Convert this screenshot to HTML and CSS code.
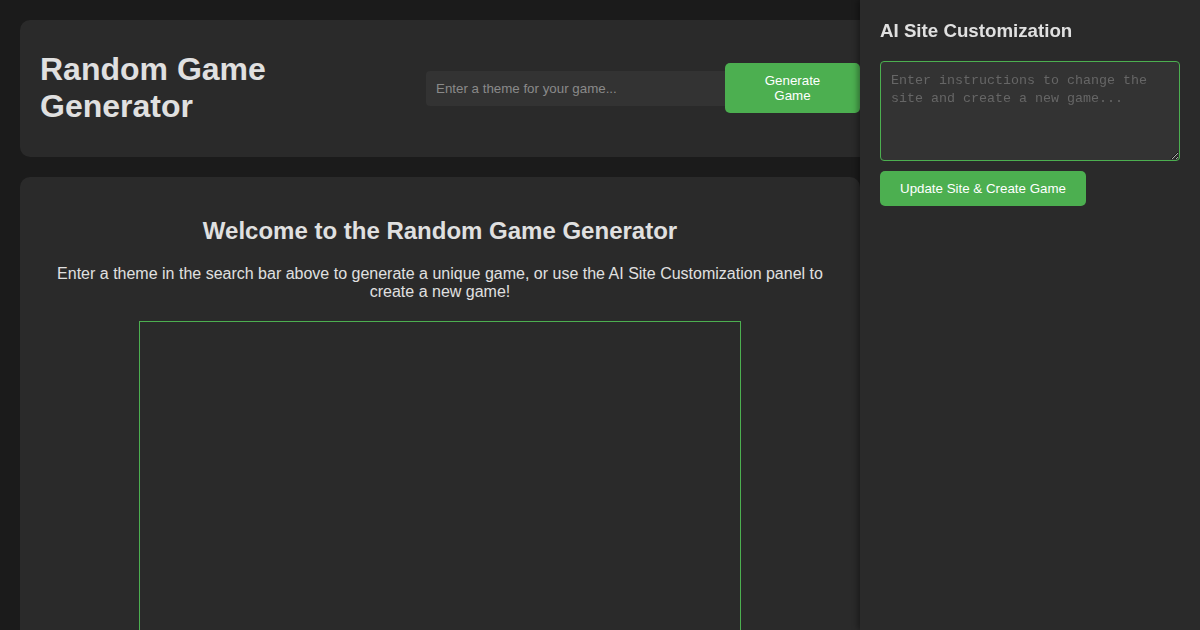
FILE: index.html
```html
<!DOCTYPE html>
<html>
<head lang="en">
    <meta charset="UTF-8">
    <title>Random Game Generator</title>

    <link rel="stylesheet" href="styles.css">

</head>
<body>

    <div id="main">
        <!-- 顶部: 标题 + 搜索 -->
        <div id="header">
            <h1>Random Game Generator</h1>
            <div class="search">
                <input type="text" placeholder="Enter a theme for your game..." />
                <button class="btn gen">Generate Game</button>
            </div>
        </div>

        <!-- 游戏区域 -->
        <div id="game">
            <h2>Welcome to the Random Game Generator</h2>
            <p>Enter a theme in the search bar above to generate a unique game, or use the AI Site Customization panel to create a new game!</p>
            <canvas id="canvas" width="600" height="400"></canvas>
        </div>
    </div>

    <!-- 右侧面板 -->
    <div id="sidebar">
        <h3>AI Site Customization</h3>
        <textarea placeholder="Enter instructions to change the site and create a new game..."></textarea>
        <button class="btn">Update Site &amp; Create Game</button>
    </div>

</body>
</html>
```

FILE: styles.css
```css
*{
    box-sizing: border-box;
}

body{
    margin: 0;
    background-color: #1b1b1b;
    color: #e0e0e0;
    font-family: "Liberation Sans", Arial, sans-serif;
    overflow: hidden;
}

#main{
    margin-right: 340px;
    padding: 20px 0 20px 20px;
}

#header{
    display: flex;
    align-items: center;
    justify-content: space-between;
    margin-right: -40px;
    padding: 10px 40px 10px 20px;
    background-color: #2a2a2a;
    border-radius: 10px;
}

#header h1{
    width: 340px;
    font-size: 32px;
    margin: 20.5px 0 22.5px;
}

.search{
    display: flex;
    align-items: center;
    margin-top: -1px;
}

.search input{
    width: 299px;
    padding: 10px;
    border: none;
    border-radius: 4px 0 0 4px;
    background-color: #333;
    color: #e0e0e0;
    font-family: "Liberation Sans", Arial, sans-serif;
    font-size: 13.33px;
    outline: none;
}

.search input::placeholder{
    color: #8a8a8a;
}

.btn{
    padding: 10px 20px;
    border: none;
    border-radius: 5px;
    background-color: #4caf50;
    color: #fff;
    font-family: "Liberation Sans", Arial, sans-serif;
    font-size: 13.33px;
    cursor: pointer;
}

.btn.gen{
    width: 135px;
    padding: 10px 25px;
}

#game{
    margin-top: 20px;
    padding: 20px;
    background-color: #2a2a2a;
    border-radius: 10px;
    text-align: center;
}

#game h2{
    font-size: 24px;
    margin: 20px 0;
}

#game p{
    font-size: 16px;
    margin: 16px 0;
}

#canvas{
    display: block;
    margin: 20px auto 0;
    border: 1px solid #4caf50;
}

#sidebar{
    position: fixed;
    top: 0;
    right: 0;
    width: 340px;
    height: 100%;
    padding: 20px;
    background-color: #2a2a2a;
    box-shadow: -2px 0 6px rgba(0,0,0,0.4);
}

#sidebar h3{
    font-size: 18.72px;
    margin: 0 0 19px;
}

#sidebar textarea{
    display: block;
    width: 300px;
    height: 100px;
    padding: 10px;
    border: 1px solid #4caf50;
    border-radius: 4px;
    background-color: #333;
    color: #e0e0e0;
    font-family: "Liberation Mono", "Courier New", monospace;
    font-size: 13.33px;
    line-height: 18px;
    resize: vertical;
    margin-bottom: 10px;
}

#sidebar textarea::placeholder{
    color: #666;
}
```
